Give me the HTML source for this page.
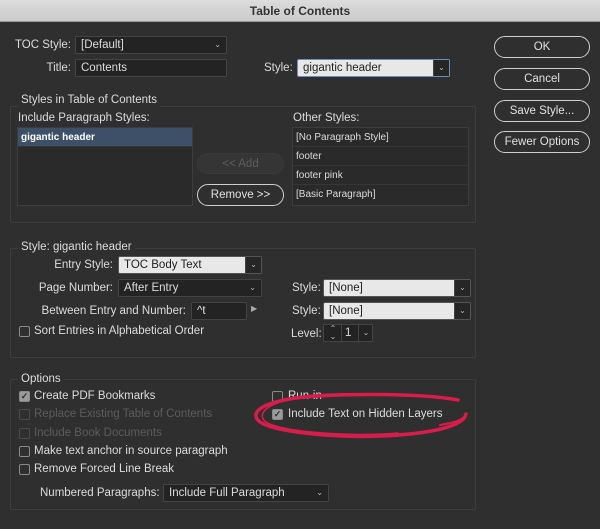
<!DOCTYPE html>
<html><head><style>
*{box-sizing:border-box;margin:0;padding:0}
body{width:600px;height:529px;background:#2f2f2f;font-family:"Liberation Sans",sans-serif;font-size:11.5px;color:#dcdcdc;position:relative;overflow:hidden}
.a{position:absolute;white-space:nowrap}
.r{text-align:right}
.fld{position:absolute;background:#232323;border:1px solid #444;border-radius:2px;padding-left:5px;line-height:16px;color:#dcdcdc}
.lt{background:#e8e8e8;color:#222;border:1px solid #555}
.arr{position:absolute;right:0;top:0;bottom:0;width:16px;background:#262626;border-left:1px solid #444;color:#bbb;font-size:8px;text-align:center;line-height:16px}
.grp{position:absolute;border:1px solid #3d3d3d;border-radius:2px}
.gl{position:absolute;background:#2f2f2f;padding:0 3px;line-height:13px}
.btn{position:absolute;border:1.5px solid #cfcfcf;border-radius:12px;display:flex;align-items:center;justify-content:center;color:#e0e0e0}
.cb{position:absolute;width:11px;height:11px;border:1px solid #8a8a8a;border-radius:2px}
.cb.on{background:#9a9a9a;color:#2f2f2f;font-size:9px;line-height:9px;text-align:center;font-weight:bold}
.dis{color:#5c5c5c}
.dis.cb,.cb.dis{border-color:#4a4a4a}
.list{position:absolute;border:1px solid #3d3d3d;background:#2a2a2a}
.row{height:19px;line-height:19px;padding-left:3px;border-bottom:1px solid #363636;font-size:10px}
</style></head><body>
<div class="a" style="left:0;top:0;width:600px;height:22px;background:linear-gradient(#dcdcdc,#cbcbcb);border-bottom:1px solid #999;text-align:center;line-height:22px;color:#333;font-weight:bold;font-size:12px">Table of Contents</div>

<div class="a r" style="left:0;width:71px;top:39px">TOC Style:</div>
<div class="fld" style="left:75px;top:36px;width:152px;height:18px">[Default]<span style="position:absolute;right:5px;color:#bbb;font-size:8px">&#8964;</span></div>
<div class="a r" style="left:0;width:71px;top:62px">Title:</div>
<div class="fld" style="left:75px;top:59px;width:152px;height:18px">Contents</div>
<div class="a" style="left:264px;top:62px">Style:</div>
<div class="fld lt" style="left:297px;top:59px;width:153px;height:18px;border:1px solid #6d8fc0">gigantic header<div class="arr">&#8964;</div></div>

<div class="btn" style="left:494px;top:36px;width:96px;height:22px">OK</div>
<div class="btn" style="left:494px;top:68px;width:96px;height:22px">Cancel</div>
<div class="btn" style="left:494px;top:100px;width:96px;height:22px">Save Style...</div>
<div class="btn" style="left:494px;top:131px;width:96px;height:22px">Fewer Options</div>

<div class="grp" style="left:10px;top:106px;width:466px;height:117px"></div>
<div class="gl" style="left:18px;top:94px">Styles in Table of Contents</div>
<div class="a" style="left:18px;top:112px">Include Paragraph Styles:</div>
<div class="list" style="left:17px;top:127px;width:176px;height:79px"><div class="row" style="background:#3d5068;font-weight:bold;color:#fff">gigantic header</div></div>
<div class="btn" style="left:197px;top:153px;width:87px;height:21px;border-color:#3a3a3a;background:#353535;color:#5e5e5e">&lt;&lt; Add</div>
<div class="btn" style="left:197px;top:184px;width:87px;height:22px">Remove &gt;&gt;</div>
<div class="a" style="left:293px;top:112px">Other Styles:</div>
<div class="list" style="left:292px;top:127px;width:177px;height:79px">
<div class="row">[No Paragraph Style]</div><div class="row">footer</div><div class="row">footer pink</div><div class="row" style="border:0">[Basic Paragraph]</div></div>

<div class="grp" style="left:10px;top:248px;width:466px;height:110px"></div>
<div class="gl" style="left:18px;top:241px">Style: gigantic header</div>
<div class="a r" style="left:0;width:113px;top:259px">Entry Style:</div>
<div class="fld lt" style="left:118px;top:256px;width:144px;height:18px">TOC Body Text<div class="arr">&#8964;</div></div>
<div class="a r" style="left:0;width:113px;top:282px">Page Number:</div>
<div class="fld" style="left:118px;top:279px;width:144px;height:18px">After Entry<span style="position:absolute;right:5px;color:#bbb;font-size:8px">&#8964;</span></div>
<div class="a r" style="left:0;width:186px;top:305px">Between Entry and Number:</div>
<div class="fld" style="left:191px;top:302px;width:56px;height:18px">^t</div>
<div class="a" style="left:251px;top:304px;font-size:8px;color:#aaa">&#9654;</div>
<div class="cb" style="left:19px;top:326px"></div>
<div class="a" style="left:34px;top:325px">Sort Entries in Alphabetical Order</div>
<div class="a" style="left:292px;top:282px">Style:</div>
<div class="fld lt" style="left:323px;top:279px;width:148px;height:18px">[None]<div class="arr">&#8964;</div></div>
<div class="a" style="left:292px;top:305px">Style:</div>
<div class="fld lt" style="left:323px;top:302px;width:148px;height:18px">[None]<div class="arr">&#8964;</div></div>
<div class="a" style="left:291px;top:328px">Level:</div>
<div class="fld" style="left:323px;top:324px;width:50px;height:18px;padding:0"><span style="position:absolute;left:2px;top:0;width:14px;font-size:8px;color:#bbb;line-height:8px;text-align:center">&#8963;<br>&#8964;</span><span style="position:absolute;left:17px;top:0;height:16px;border-left:1px solid #444;padding-left:3px">1</span><span style="position:absolute;left:34px;top:0;width:15px;height:16px;border-left:1px solid #444;text-align:center;font-size:8px;color:#bbb">&#8964;</span></div>

<div class="grp" style="left:10px;top:379px;width:466px;height:131px"></div>
<div class="gl" style="left:18px;top:373px">Options</div>
<div class="cb on" style="left:19px;top:391px">&#10003;</div><div class="a" style="left:34px;top:390px">Create PDF Bookmarks</div>
<div class="cb dis" style="left:19px;top:409px"></div><div class="a dis" style="left:34px;top:408px">Replace Existing Table of Contents</div>
<div class="cb dis" style="left:19px;top:428px"></div><div class="a dis" style="left:34px;top:427px">Include Book Documents</div>
<div class="cb" style="left:19px;top:446px"></div><div class="a" style="left:34px;top:445px">Make text anchor in source paragraph</div>
<div class="cb" style="left:19px;top:464px"></div><div class="a" style="left:34px;top:463px">Remove Forced Line Break</div>
<div class="a" style="left:40px;top:487px">Numbered Paragraphs:</div>
<div class="fld" style="left:163px;top:484px;width:166px;height:18px">Include Full Paragraph<span style="position:absolute;right:5px;color:#bbb;font-size:8px">&#8964;</span></div>
<div class="cb" style="left:272px;top:391px"></div><div class="a" style="left:288px;top:390px">Run-in</div>
<div class="cb on" style="left:272px;top:409px">&#10003;</div><div class="a" style="left:288px;top:408px">Include Text on Hidden Layers</div>

<svg class="a" style="left:0;top:0" width="600" height="529">
<g fill="none" stroke="#d81c4c" stroke-linecap="round">
<path d="M458 400 C420 393 330 393 295 398 C265 403 252 410 257 419 C264 431 330 438 380 436 C432 434 464 426 466 414" stroke-width="3.5"/>
<path d="M450 398 C410 393 320 395 288 400 C262 406 258 416 266 422 C282 432 350 437 398 433" stroke-width="1.5"/>
<path d="M466 414 C463 421 452 423 440 425" stroke-width="2"/>
</g></svg>
</body></html>
